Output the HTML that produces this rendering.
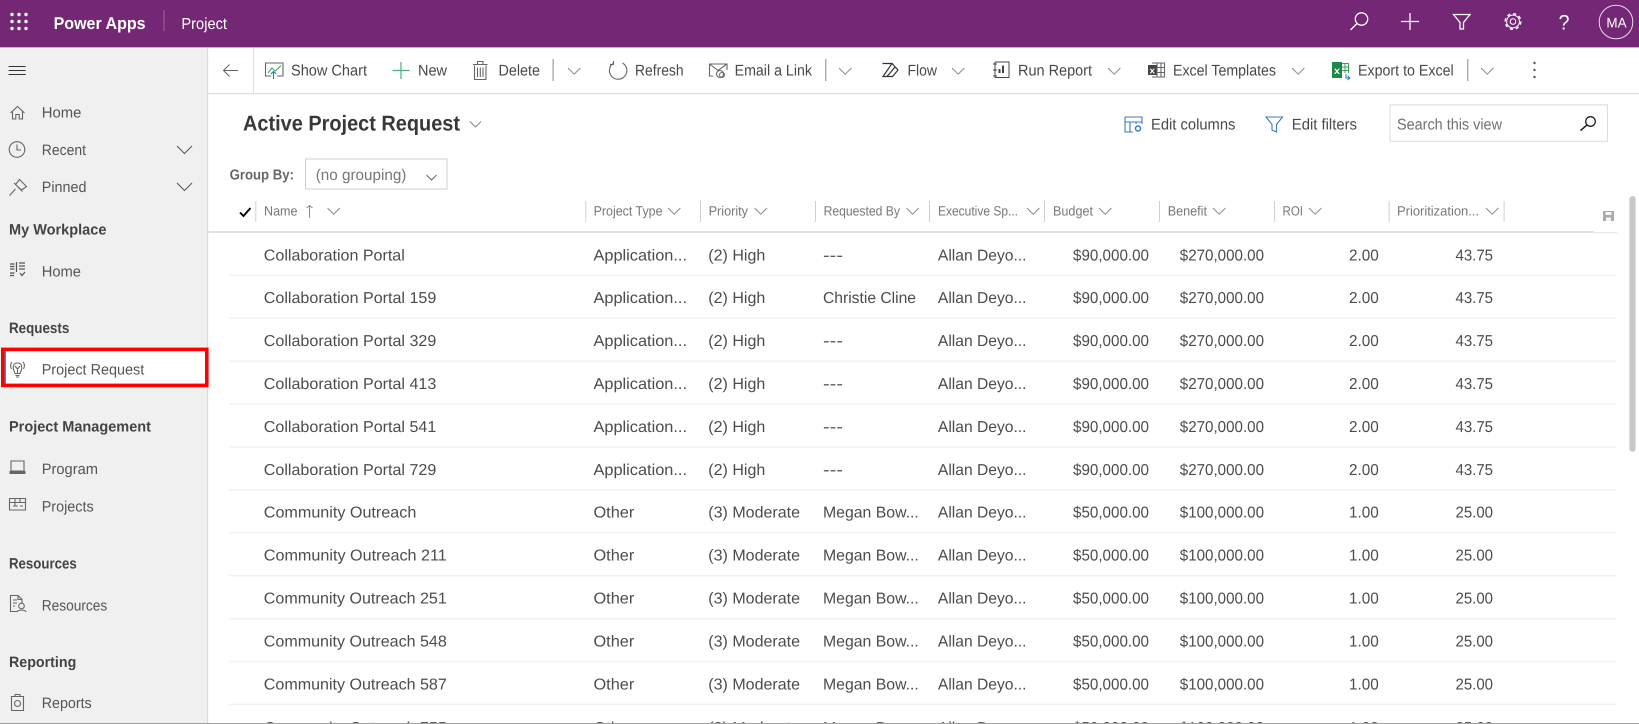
<!DOCTYPE html>
<html lang="en"><head><meta charset="utf-8"><title>Active Project Request</title>
<style>
html,body{margin:0;padding:0;background:#fff;overflow:hidden;width:1639px;height:724px}
svg{display:block}
text{font-family:"Liberation Sans",sans-serif;text-rendering:geometricPrecision}
.r text{font-size:15.8px;fill:#4c4c4c}
.h{font-size:13.5px;fill:#777}
.n{font-size:15px;fill:#555}
.s{font-size:15px;font-weight:700;fill:#444}
.b{font-size:15.5px;fill:#484848}
.ln{fill:none;stroke:#666;stroke-width:1.1}
.ch{fill:none;stroke:#8a8a8a;stroke-width:1}
.wh{fill:none;stroke:#fff;stroke-width:1.3}
</style></head><body>
<svg width="1639" height="724" viewBox="0 0 1639 724" xmlns="http://www.w3.org/2000/svg">
<defs><path id="c" d="M0 0L6.2 6.2L12.4 0" fill="none" stroke="#8a8a8a" stroke-width="1"/></defs>
<rect width="1639" height="724" fill="#fff"/>

<!-- top bar -->
<rect width="1639" height="47.5" fill="#742774"/>
<rect y="47" width="1639" height="1" fill="#c9b0c9"/>
<g fill="#fff"><circle cx="12" cy="14.5" r="1.7"/><circle cx="19" cy="14.5" r="1.7"/><circle cx="26" cy="14.5" r="1.7"/><circle cx="12" cy="21.5" r="1.7"/><circle cx="19" cy="21.5" r="1.7"/><circle cx="26" cy="21.5" r="1.7"/><circle cx="12" cy="28.500" r="1.7"/><circle cx="19" cy="28.500" r="1.7"/><circle cx="26" cy="28.500" r="1.7"/></g>
<text x="53.6" y="29" font-size="17" font-weight="700" fill="#fff" textLength="92" lengthAdjust="spacingAndGlyphs">Power Apps</text>
<rect x="163.5" y="10" width="1" height="21" fill="#9a6a9a"/>
<text x="181.4" y="29" font-size="16" fill="#fff" textLength="45.6" lengthAdjust="spacingAndGlyphs">Project</text>
<circle cx="1361.5" cy="19" r="6.2" class="wh"/><path d="M1357 23.5L1350.5 30" class="wh"/>
<path d="M1401 21.5H1419M1410 13V30" class="wh"/>
<path d="M1453.5 14.5H1470L1463.5 22.5V29H1460V22.5Z" class="wh"/>
<circle cx="1513" cy="21.5" r="2.8" fill="none" stroke="#fff" stroke-width="1"/><circle cx="1513" cy="21.5" r="6.4" fill="none" stroke="#fff" stroke-width="1"/><circle cx="1513" cy="21.5" r="7.8" fill="none" stroke="#fff" stroke-width="1.5" stroke-dasharray="3.2 2.9"/>
<text x="1558.5" y="29.5" font-size="21" fill="#fff" textLength="11" lengthAdjust="spacingAndGlyphs">?</text>
<circle cx="1616" cy="22" r="16.8" fill="none" stroke="#e8dbe8" stroke-width="1"/>
<text x="1606.4" y="27.5" font-size="14" fill="#fff" textLength="20.2" lengthAdjust="spacingAndGlyphs">MA</text>

<!-- sidebar -->
<rect y="48" width="207" height="675" fill="#f0f0f0"/>
<rect x="207" y="48" width="1.2" height="675" fill="#dadada"/>
<path d="M8.6 66.5H25.7M8.6 70.5H25.7M8.6 74.5H25.7" fill="none" stroke="#333" stroke-width="1"/>

<path d="M10.5 113L17.5 106.5L24.5 113M12.5 111.5V119H15.8V114.5H19.2V119H22.5V111.5" class="ln"/>
<text class="n" x="41.8" y="117.6" textLength="39.6" lengthAdjust="spacingAndGlyphs">Home</text>
<circle cx="17" cy="149.5" r="7.8" class="ln"/><path d="M17 144.5V150H21" class="ln"/>
<text class="n" x="41.8" y="155.1" textLength="44.2" lengthAdjust="spacingAndGlyphs">Recent</text>
<path d="M177 146L184.500 153.500L192 146" fill="none" stroke="#555" stroke-width="1"/>
<path d="M9.500 195.500L15.500 189M14 183L22.500 191.500M19.500 179.500L26.500 186.500L21.500 190L15.500 184.500Z" class="ln"/>
<text class="n" x="41.8" y="191.9" textLength="44.700" lengthAdjust="spacingAndGlyphs">Pinned</text>
<path d="M177 183L184.500 190.500L192 183" fill="none" stroke="#555" stroke-width="1"/>
<text class="s" x="9" y="234.300" textLength="97.400" lengthAdjust="spacingAndGlyphs">My Workplace</text>

<path d="M10 264H14.500M10 266.500H14.500M10 269H14.500M16.500 262V272M19 263H25M19 266H25M19 269H25M10 273H14.500M10 275.500H14M20 273L22 275.500L25 272" fill="none" stroke="#555" stroke-width="1.200"/>
<text class="n" x="41.700" y="276.300" textLength="39.300" lengthAdjust="spacingAndGlyphs">Home</text>
<text class="s" x="9" y="332.900" textLength="60.300" lengthAdjust="spacingAndGlyphs">Requests</text>

<rect x="2.800" y="349.400" width="204" height="36" fill="#fff" stroke="#f00" stroke-width="3.600"/>
<rect x="4.600" y="351.200" width="1.200" height="32.400" fill="#2b5fb8"/>
<path d="M14 371C12 366 14 363 17.500 363C21 363 23 366 21 371L20 373.500H15ZM15.500 375.500H19.500M16 377H19M15 366L17.500 369L20 366M17.500 369V373M11.500 369C10 366 10.500 363.500 12 362M23.500 369C25 366 24.500 363.500 23 362" class="ln"/>
<text class="n" x="41.700" y="374.600" textLength="102.600" lengthAdjust="spacingAndGlyphs">Project Request</text>

<text class="s" x="9" y="431.600" textLength="142" lengthAdjust="spacingAndGlyphs">Project Management</text>
<path d="M11 461H24V471H11Z" class="ln"/><rect x="9.500" y="471" width="16" height="3" fill="#666"/>
<text class="n" x="41.700" y="473.900" textLength="56.300" lengthAdjust="spacingAndGlyphs">Program</text>
<path d="M9.500 498.500H25.500V510H9.500ZM9.500 502.500H25.500M15 498.500V506M13 506H18M20 506H23M20 498.500V502.500" class="ln"/>
<text class="n" x="41.700" y="511.300" textLength="52" lengthAdjust="spacingAndGlyphs">Projects</text>
<text class="s" x="9" y="568.300" textLength="67.700" lengthAdjust="spacingAndGlyphs">Resources</text>
<path d="M18 611.500H10.500V595.500H18L22 599.500V603M13 600H17M13 603H17M13 606H15M18 595.500V599.500H22" class="ln"/><circle cx="21.500" cy="606" r="2.800" class="ln"/><path d="M17 612C17.500 609.500 25.500 609.500 26 612" class="ln"/>
<text class="n" x="41.700" y="610.300" textLength="65.600" lengthAdjust="spacingAndGlyphs">Resources</text>
<text class="s" x="9" y="666.900" textLength="67.300" lengthAdjust="spacingAndGlyphs">Reporting</text>
<path d="M11.500 696.500H23.500V710.500H11.500ZM15 696.500V694.500H20V696.500" class="ln"/><circle cx="17.500" cy="703.500" r="3" class="ln"/>
<text class="n" x="41.700" y="707.900" textLength="50" lengthAdjust="spacingAndGlyphs">Reports</text>

<!-- toolbar -->
<rect x="208" y="93" width="1431" height="1.200" fill="#dedede"/>
<rect x="253" y="48" width="1" height="45" fill="#dedede"/>
<path d="M238 70.500H223.500M229.500 64.500L223.500 70.500L229.500 76.500" fill="none" stroke="#666" stroke-width="1"/>

<path d="M271 76H265.500V63H283V76H277" class="ln"/><path d="M268 73L272 68L275.500 71L281 65.500" fill="none" stroke="#3aa76d" stroke-width="1.100"/><path d="M273.500 79V71.500M270.800 74L273.500 71.500L276.200 74" fill="none" stroke="#1e78c8" stroke-width="1.100"/>
<text class="b" x="291" y="75.600" textLength="76" lengthAdjust="spacingAndGlyphs">Show Chart</text>
<path d="M392.500 70.500H409.500M401 62V79" fill="none" stroke="#49ad7b" stroke-width="1.200"/>
<text class="b" x="418" y="75.600" textLength="29" lengthAdjust="spacingAndGlyphs">New</text>
<path d="M474.500 65.500V79.500H486V65.500M473 64.500H487.500M477.500 64V61.500H483V64M477.500 67.500V77M480.300 67.500V77M483 67.500V77" class="ln"/>
<text class="b" x="498.500" y="75.600" textLength="41.500" lengthAdjust="spacingAndGlyphs">Delete</text>
<rect x="552.600" y="59" width="1" height="22" fill="#888"/>
<use href="#c" x="568" y="68"/>

<path d="M613 63.500A8.700 8.700 0 1 0 622.500 63M613.500 61V64.500H610" class="ln"/>
<text class="b" x="635" y="75.600" textLength="48.600" lengthAdjust="spacingAndGlyphs">Refresh</text>
<path d="M713 76H709.500V64H727V70M709.500 64L718 70.500L727 64" class="ln"/><circle cx="720" cy="74" r="3.500" class="ln"/><circle cx="722" cy="75" r="2.500" class="ln"/>
<text class="b" x="734.600" y="75.600" textLength="77.400" lengthAdjust="spacingAndGlyphs">Email a Link</text>
<rect x="825.300" y="59" width="1" height="22" fill="#888"/>
<use href="#c" x="839" y="68"/>

<path d="M882.500 63.500H892L883 76.500H892.500L898 70L892 63.500M887 76.500L895.500 66.500" fill="none" stroke="#333" stroke-width="1.200"/>
<text class="b" x="907.500" y="75.600" textLength="29.500" lengthAdjust="spacingAndGlyphs">Flow</text>
<use href="#c" x="952" y="68"/>

<path d="M995 62H1009V77.500H995M993 64H997M993 70H997M993 76H997M995 62V77.500" fill="none" stroke="#444" stroke-width="1"/><path d="M999.500 73V69M1003 73V65.500" fill="none" stroke="#444" stroke-width="2"/>
<text class="b" x="1018" y="75.600" textLength="74" lengthAdjust="spacingAndGlyphs">Run Report</text>
<use href="#c" x="1108" y="68"/>

<path d="M1152 63H1164.500V77H1152M1157 63V77M1161 63V77M1152 67.500H1164.500M1152 72.500H1164.500" class="ln"/><rect x="1148" y="65" width="8.500" height="10" fill="#444"/><text x="1149.500" y="73.500" font-size="9" font-weight="700" fill="#fff" textLength="5.500" lengthAdjust="spacingAndGlyphs">x</text>
<text class="b" x="1173" y="75.600" textLength="103" lengthAdjust="spacingAndGlyphs">Excel Templates</text>
<use href="#c" x="1292" y="68"/>

<rect x="1332" y="62" width="10" height="16" fill="#1c8a43"/><text x="1334" y="74" font-size="10" font-weight="700" fill="#fff" textLength="6" lengthAdjust="spacingAndGlyphs">x</text>
<path d="M1342 63.500H1348.500V73M1342 67H1348.500M1342 70.500H1348.500M1345 63.500V73" fill="none" stroke="#3f9e62" stroke-width="1"/>
<path d="M1346 74V78H1350M1347.500 76L1350 78L1347.500 80" fill="none" stroke="#1e78c8" stroke-width="1"/>
<text class="b" x="1358" y="75.600" textLength="95.700" lengthAdjust="spacingAndGlyphs">Export to Excel</text>
<rect x="1467.300" y="59" width="1" height="22" fill="#888"/>
<use href="#c" x="1481" y="68"/>
<g fill="#555"><circle cx="1534.500" cy="63" r="1.200"/><circle cx="1534.500" cy="70" r="1.200"/><circle cx="1534.500" cy="77" r="1.200"/></g>

<!-- title row -->
<text x="243" y="130.400" font-size="21.500" font-weight="700" fill="#383838" textLength="217" lengthAdjust="spacingAndGlyphs">Active Project Request</text>
<path d="M470 121.500L475.500 127L481 121.500" class="ch"/>
<path d="M1125 117H1142V124M1125 117V132H1133M1125 122H1142M1130 122V132M1136 122V124" fill="none" stroke="#3b7cb8" stroke-width="1.100"/><circle cx="1138" cy="128.500" r="2.500" fill="none" stroke="#3b7cb8" stroke-width="1.500"/>
<text class="b" x="1151" y="129.600" textLength="84.400" lengthAdjust="spacingAndGlyphs">Edit columns</text>
<path d="M1266 117H1282.500L1276.500 124.500V132L1272 130V124.500Z" fill="none" stroke="#3b7cb8" stroke-width="1.100"/>
<text class="b" x="1291.800" y="129.600" textLength="65.200" lengthAdjust="spacingAndGlyphs">Edit filters</text>
<rect x="1390" y="104.800" width="217.500" height="36.500" fill="#fff" stroke="#dcdcdc"/>
<text x="1397" y="129.600" font-size="15.500" fill="#707070" textLength="105" lengthAdjust="spacingAndGlyphs">Search this view</text>
<circle cx="1590.500" cy="121.500" r="4.800" fill="none" stroke="#222" stroke-width="1.300"/><path d="M1587 125L1580.500 130.500" fill="none" stroke="#222" stroke-width="1.500"/>

<text x="229.600" y="179.600" font-size="14.500" font-weight="700" fill="#666" textLength="64.400" lengthAdjust="spacingAndGlyphs">Group By:</text>
<rect x="305.500" y="159" width="141.500" height="30" fill="#fff" stroke="#cfcfcf"/>
<text x="315.700" y="180.200" font-size="15.500" fill="#777" textLength="90.700" lengthAdjust="spacingAndGlyphs">(no grouping)</text>
<path d="M426.500 175L431.500 180L436.500 175" fill="none" stroke="#666" stroke-width="1"/>

<!-- grid header -->
<path d="M240 212.500L243.500 216L250.500 208" fill="none" stroke="#000" stroke-width="1.900"/>
<g fill="#cfcfcf"><rect x="255.300" y="201" width="1" height="21"/><rect x="585.300" y="201" width="1" height="21"/><rect x="700" y="201" width="1" height="21"/><rect x="815" y="201" width="1" height="21"/><rect x="929" y="201" width="1" height="21"/><rect x="1044" y="201" width="1" height="21"/><rect x="1159" y="201" width="1" height="21"/><rect x="1274" y="201" width="1" height="21"/><rect x="1388.600" y="201" width="1" height="21"/><rect x="1503.600" y="201" width="1" height="21"/></g>
<g transform="translate(0,-0.4)">
<text class="h" x="264" y="216" textLength="33.500" lengthAdjust="spacingAndGlyphs">Name</text>
<text class="h" x="593.600" y="216" textLength="68.900" lengthAdjust="spacingAndGlyphs">Project Type</text>
<text class="h" x="708.600" y="216" textLength="39.400" lengthAdjust="spacingAndGlyphs">Priority</text>
<text class="h" x="823.600" y="216" textLength="76.400" lengthAdjust="spacingAndGlyphs">Requested By</text>
<text class="h" x="938" y="216" textLength="80" lengthAdjust="spacingAndGlyphs">Executive Sp...</text>
<text class="h" x="1053" y="216" textLength="40" lengthAdjust="spacingAndGlyphs">Budget</text>
<text class="h" x="1167.700" y="216" textLength="39.300" lengthAdjust="spacingAndGlyphs">Benefit</text>
<text class="h" x="1282.500" y="216" textLength="20.500" lengthAdjust="spacingAndGlyphs">ROI</text>
<text class="h" x="1397" y="216" textLength="82" lengthAdjust="spacingAndGlyphs">Prioritization...</text>
</g>
<path d="M309.500 218V205.500M306.500 208L309.500 205.500L312.500 208" class="ch"/>
<use href="#c" x="327.500" y="208"/><use href="#c" x="668" y="208"/><use href="#c" x="754.600" y="208"/><use href="#c" x="906.400" y="208"/><use href="#c" x="1027" y="208"/><use href="#c" x="1099" y="208"/><use href="#c" x="1213" y="208"/><use href="#c" x="1309" y="208"/><use href="#c" x="1486" y="208"/>
<path d="M1603 211H1614V221H1603Z" fill="#aaa"/><rect x="1605.500" y="212" width="6" height="3" fill="#f4f4f4"/><rect x="1606" y="217.500" width="5" height="3.500" fill="#f4f4f4"/>
<rect x="208" y="231" width="1386" height="2" fill="#e2e2e2"/><rect x="1594" y="232" width="23" height="1" fill="#e6e6e6"/>

<!-- row lines -->
<g fill="#f1f1f1"><rect x="229.500" y="274.700" width="1387" height="1.400"/><rect x="229.500" y="317.600" width="1387" height="1.400"/><rect x="229.500" y="360.500" width="1387" height="1.400"/><rect x="229.500" y="403.400" width="1387" height="1.400"/><rect x="229.500" y="446.300" width="1387" height="1.400"/><rect x="229.500" y="489.200" width="1387" height="1.400"/><rect x="229.500" y="532.100" width="1387" height="1.400"/><rect x="229.500" y="575" width="1387" height="1.400"/><rect x="229.500" y="617.900" width="1387" height="1.400"/><rect x="229.500" y="660.800" width="1387" height="1.400"/><rect x="229.500" y="703.700" width="1387" height="1.400"/></g>

<!-- rows -->
<g transform="translate(0,-0.700)">
<g class="r"><text x="263.800" y="261" textLength="141" lengthAdjust="spacingAndGlyphs">Collaboration Portal</text><text x="593.500" y="261" textLength="93.500" lengthAdjust="spacingAndGlyphs">Application...</text><text x="708.300" y="261" textLength="57" lengthAdjust="spacingAndGlyphs">(2) High</text><text x="823" y="261" textLength="20" lengthAdjust="spacingAndGlyphs">---</text><text x="937.900" y="261" textLength="88.600" lengthAdjust="spacingAndGlyphs">Allan Deyo...</text><text x="1073" y="261" textLength="76" lengthAdjust="spacingAndGlyphs">$90,000.00</text><text x="1179.800" y="261" textLength="84.200" lengthAdjust="spacingAndGlyphs">$270,000.00</text><text x="1349" y="261" textLength="29.800" lengthAdjust="spacingAndGlyphs">2.00</text><text x="1455.500" y="261" textLength="37.500" lengthAdjust="spacingAndGlyphs">43.75</text></g>
<g class="r" transform="translate(0,42.900)"><text x="263.800" y="261" textLength="172.500" lengthAdjust="spacingAndGlyphs">Collaboration Portal 159</text><text x="593.500" y="261" textLength="93.500" lengthAdjust="spacingAndGlyphs">Application...</text><text x="708.300" y="261" textLength="57" lengthAdjust="spacingAndGlyphs">(2) High</text><text x="823" y="261" textLength="93" lengthAdjust="spacingAndGlyphs">Christie Cline</text><text x="937.900" y="261" textLength="88.600" lengthAdjust="spacingAndGlyphs">Allan Deyo...</text><text x="1073" y="261" textLength="76" lengthAdjust="spacingAndGlyphs">$90,000.00</text><text x="1179.800" y="261" textLength="84.200" lengthAdjust="spacingAndGlyphs">$270,000.00</text><text x="1349" y="261" textLength="29.800" lengthAdjust="spacingAndGlyphs">2.00</text><text x="1455.500" y="261" textLength="37.500" lengthAdjust="spacingAndGlyphs">43.75</text></g>
<g class="r" transform="translate(0,85.800)"><text x="263.800" y="261" textLength="172.500" lengthAdjust="spacingAndGlyphs">Collaboration Portal 329</text><text x="593.500" y="261" textLength="93.500" lengthAdjust="spacingAndGlyphs">Application...</text><text x="708.300" y="261" textLength="57" lengthAdjust="spacingAndGlyphs">(2) High</text><text x="823" y="261" textLength="20" lengthAdjust="spacingAndGlyphs">---</text><text x="937.900" y="261" textLength="88.600" lengthAdjust="spacingAndGlyphs">Allan Deyo...</text><text x="1073" y="261" textLength="76" lengthAdjust="spacingAndGlyphs">$90,000.00</text><text x="1179.800" y="261" textLength="84.200" lengthAdjust="spacingAndGlyphs">$270,000.00</text><text x="1349" y="261" textLength="29.800" lengthAdjust="spacingAndGlyphs">2.00</text><text x="1455.500" y="261" textLength="37.500" lengthAdjust="spacingAndGlyphs">43.75</text></g>
<g class="r" transform="translate(0,128.700)"><text x="263.800" y="261" textLength="172.500" lengthAdjust="spacingAndGlyphs">Collaboration Portal 413</text><text x="593.500" y="261" textLength="93.500" lengthAdjust="spacingAndGlyphs">Application...</text><text x="708.300" y="261" textLength="57" lengthAdjust="spacingAndGlyphs">(2) High</text><text x="823" y="261" textLength="20" lengthAdjust="spacingAndGlyphs">---</text><text x="937.900" y="261" textLength="88.600" lengthAdjust="spacingAndGlyphs">Allan Deyo...</text><text x="1073" y="261" textLength="76" lengthAdjust="spacingAndGlyphs">$90,000.00</text><text x="1179.800" y="261" textLength="84.200" lengthAdjust="spacingAndGlyphs">$270,000.00</text><text x="1349" y="261" textLength="29.800" lengthAdjust="spacingAndGlyphs">2.00</text><text x="1455.500" y="261" textLength="37.500" lengthAdjust="spacingAndGlyphs">43.75</text></g>
<g class="r" transform="translate(0,171.600)"><text x="263.800" y="261" textLength="172.500" lengthAdjust="spacingAndGlyphs">Collaboration Portal 541</text><text x="593.500" y="261" textLength="93.500" lengthAdjust="spacingAndGlyphs">Application...</text><text x="708.300" y="261" textLength="57" lengthAdjust="spacingAndGlyphs">(2) High</text><text x="823" y="261" textLength="20" lengthAdjust="spacingAndGlyphs">---</text><text x="937.900" y="261" textLength="88.600" lengthAdjust="spacingAndGlyphs">Allan Deyo...</text><text x="1073" y="261" textLength="76" lengthAdjust="spacingAndGlyphs">$90,000.00</text><text x="1179.800" y="261" textLength="84.200" lengthAdjust="spacingAndGlyphs">$270,000.00</text><text x="1349" y="261" textLength="29.800" lengthAdjust="spacingAndGlyphs">2.00</text><text x="1455.500" y="261" textLength="37.500" lengthAdjust="spacingAndGlyphs">43.75</text></g>
<g class="r" transform="translate(0,214.500)"><text x="263.800" y="261" textLength="172.500" lengthAdjust="spacingAndGlyphs">Collaboration Portal 729</text><text x="593.500" y="261" textLength="93.500" lengthAdjust="spacingAndGlyphs">Application...</text><text x="708.300" y="261" textLength="57" lengthAdjust="spacingAndGlyphs">(2) High</text><text x="823" y="261" textLength="20" lengthAdjust="spacingAndGlyphs">---</text><text x="937.900" y="261" textLength="88.600" lengthAdjust="spacingAndGlyphs">Allan Deyo...</text><text x="1073" y="261" textLength="76" lengthAdjust="spacingAndGlyphs">$90,000.00</text><text x="1179.800" y="261" textLength="84.200" lengthAdjust="spacingAndGlyphs">$270,000.00</text><text x="1349" y="261" textLength="29.800" lengthAdjust="spacingAndGlyphs">2.00</text><text x="1455.500" y="261" textLength="37.500" lengthAdjust="spacingAndGlyphs">43.75</text></g>
<g class="r" transform="translate(0,257.400)"><text x="263.800" y="261" textLength="152.500" lengthAdjust="spacingAndGlyphs">Community Outreach</text><text x="593.500" y="261" textLength="40.800" lengthAdjust="spacingAndGlyphs">Other</text><text x="708.300" y="261" textLength="91.700" lengthAdjust="spacingAndGlyphs">(3) Moderate</text><text x="823" y="261" textLength="95.800" lengthAdjust="spacingAndGlyphs">Megan Bow...</text><text x="937.900" y="261" textLength="88.600" lengthAdjust="spacingAndGlyphs">Allan Deyo...</text><text x="1073" y="261" textLength="76" lengthAdjust="spacingAndGlyphs">$50,000.00</text><text x="1179.800" y="261" textLength="84.200" lengthAdjust="spacingAndGlyphs">$100,000.00</text><text x="1349" y="261" textLength="29.800" lengthAdjust="spacingAndGlyphs">1.00</text><text x="1455.500" y="261" textLength="37.500" lengthAdjust="spacingAndGlyphs">25.00</text></g>
<g class="r" transform="translate(0,300.300)"><text x="263.800" y="261" textLength="183" lengthAdjust="spacingAndGlyphs">Community Outreach 211</text><text x="593.500" y="261" textLength="40.800" lengthAdjust="spacingAndGlyphs">Other</text><text x="708.300" y="261" textLength="91.700" lengthAdjust="spacingAndGlyphs">(3) Moderate</text><text x="823" y="261" textLength="95.800" lengthAdjust="spacingAndGlyphs">Megan Bow...</text><text x="937.900" y="261" textLength="88.600" lengthAdjust="spacingAndGlyphs">Allan Deyo...</text><text x="1073" y="261" textLength="76" lengthAdjust="spacingAndGlyphs">$50,000.00</text><text x="1179.800" y="261" textLength="84.200" lengthAdjust="spacingAndGlyphs">$100,000.00</text><text x="1349" y="261" textLength="29.800" lengthAdjust="spacingAndGlyphs">1.00</text><text x="1455.500" y="261" textLength="37.500" lengthAdjust="spacingAndGlyphs">25.00</text></g>
<g class="r" transform="translate(0,343.200)"><text x="263.800" y="261" textLength="183" lengthAdjust="spacingAndGlyphs">Community Outreach 251</text><text x="593.500" y="261" textLength="40.800" lengthAdjust="spacingAndGlyphs">Other</text><text x="708.300" y="261" textLength="91.700" lengthAdjust="spacingAndGlyphs">(3) Moderate</text><text x="823" y="261" textLength="95.800" lengthAdjust="spacingAndGlyphs">Megan Bow...</text><text x="937.900" y="261" textLength="88.600" lengthAdjust="spacingAndGlyphs">Allan Deyo...</text><text x="1073" y="261" textLength="76" lengthAdjust="spacingAndGlyphs">$50,000.00</text><text x="1179.800" y="261" textLength="84.200" lengthAdjust="spacingAndGlyphs">$100,000.00</text><text x="1349" y="261" textLength="29.800" lengthAdjust="spacingAndGlyphs">1.00</text><text x="1455.500" y="261" textLength="37.500" lengthAdjust="spacingAndGlyphs">25.00</text></g>
<g class="r" transform="translate(0,386.100)"><text x="263.800" y="261" textLength="183" lengthAdjust="spacingAndGlyphs">Community Outreach 548</text><text x="593.500" y="261" textLength="40.800" lengthAdjust="spacingAndGlyphs">Other</text><text x="708.300" y="261" textLength="91.700" lengthAdjust="spacingAndGlyphs">(3) Moderate</text><text x="823" y="261" textLength="95.800" lengthAdjust="spacingAndGlyphs">Megan Bow...</text><text x="937.900" y="261" textLength="88.600" lengthAdjust="spacingAndGlyphs">Allan Deyo...</text><text x="1073" y="261" textLength="76" lengthAdjust="spacingAndGlyphs">$50,000.00</text><text x="1179.800" y="261" textLength="84.200" lengthAdjust="spacingAndGlyphs">$100,000.00</text><text x="1349" y="261" textLength="29.800" lengthAdjust="spacingAndGlyphs">1.00</text><text x="1455.500" y="261" textLength="37.500" lengthAdjust="spacingAndGlyphs">25.00</text></g>
<g class="r" transform="translate(0,429)"><text x="263.800" y="261" textLength="183" lengthAdjust="spacingAndGlyphs">Community Outreach 587</text><text x="593.500" y="261" textLength="40.800" lengthAdjust="spacingAndGlyphs">Other</text><text x="708.300" y="261" textLength="91.700" lengthAdjust="spacingAndGlyphs">(3) Moderate</text><text x="823" y="261" textLength="95.800" lengthAdjust="spacingAndGlyphs">Megan Bow...</text><text x="937.900" y="261" textLength="88.600" lengthAdjust="spacingAndGlyphs">Allan Deyo...</text><text x="1073" y="261" textLength="76" lengthAdjust="spacingAndGlyphs">$50,000.00</text><text x="1179.800" y="261" textLength="84.200" lengthAdjust="spacingAndGlyphs">$100,000.00</text><text x="1349" y="261" textLength="29.800" lengthAdjust="spacingAndGlyphs">1.00</text><text x="1455.500" y="261" textLength="37.500" lengthAdjust="spacingAndGlyphs">25.00</text></g>
<g class="r" transform="translate(0,472.500)"><text x="263.800" y="261" textLength="183" lengthAdjust="spacingAndGlyphs">Community Outreach 755</text><text x="593.500" y="261" textLength="40.800" lengthAdjust="spacingAndGlyphs">Other</text><text x="708.300" y="261" textLength="91.700" lengthAdjust="spacingAndGlyphs">(3) Moderate</text><text x="823" y="261" textLength="95.800" lengthAdjust="spacingAndGlyphs">Megan Bow...</text><text x="937.900" y="261" textLength="88.600" lengthAdjust="spacingAndGlyphs">Allan Deyo...</text><text x="1073" y="261" textLength="76" lengthAdjust="spacingAndGlyphs">$50,000.00</text><text x="1179.800" y="261" textLength="84.200" lengthAdjust="spacingAndGlyphs">$100,000.00</text><text x="1349" y="261" textLength="29.800" lengthAdjust="spacingAndGlyphs">1.00</text><text x="1455.500" y="261" textLength="37.500" lengthAdjust="spacingAndGlyphs">25.00</text></g>
</g>

<!-- scrollbar and bottom edge -->
<rect x="1629.400" y="196" width="6.200" height="255.700" rx="3" fill="#c8c8c8"/>
<rect x="0" y="723" width="1639" height="1" fill="#a0a0a0"/>
</svg>
</body></html>
